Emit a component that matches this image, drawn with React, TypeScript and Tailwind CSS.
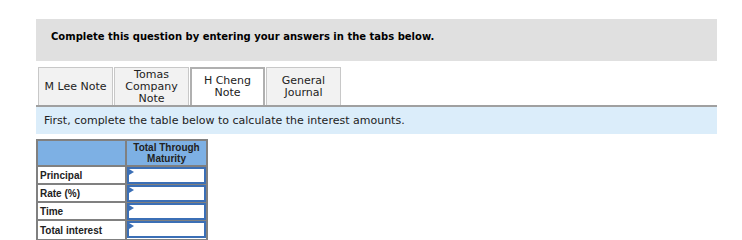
import React from "react";

const font = { fontFamily: '"DejaVu Sans", Verdana, sans-serif' };
const tableFont = { fontFamily: '"Liberation Sans", Arial, sans-serif' };

function Tab({ lines, active }: { lines: string[]; active?: boolean }) {
  return (
    <div
      className={
        "w-[75px] h-[38px] flex flex-col items-center justify-center text-[11px] leading-[12px] text-[#222] text-center " +
        (active
          ? "bg-white border-2 border-b-0 border-[#b0b0b0]"
          : "bg-[#f2f2f2] border border-b-0 border-[#c8c8c8]")
      }
    >
      {lines.map((l) => (
        <span key={l}>{l}</span>
      ))}
    </div>
  );
}

function InputCell() {
  return (
    <div className="relative h-[17px] border-2 border-[#3b6fb6] bg-white">
      <div className="absolute left-0 top-0 w-0 h-0 border-t-[3px] border-b-[3px] border-l-[5px] border-t-transparent border-b-transparent border-l-[#3b6fb6]" />
    </div>
  );
}

export default function App() {
  const rows = ["Principal", "Rate (%)", "Time", "Total interest"];
  return (
    <div className="w-[742px] h-[240px] bg-white overflow-hidden" style={font}>
      <div className="ml-[36px] mt-[19px] w-[681px] h-[42px] bg-[#e0e0e0] flex items-start pt-[12px] pl-[15px]">
        <span className="text-[10px] leading-[12px] font-bold text-black">
          Complete this question by entering your answers in the tabs below.
        </span>
      </div>
      <div className="ml-[38px] mt-[6px] flex items-end gap-[1px] h-[38px]">
        <Tab lines={["M Lee Note"]} />
        <Tab lines={["Tomas", "Company", "Note"]} />
        <Tab lines={["H Cheng", "Note"]} active />
        <Tab lines={["General", "Journal"]} />
      </div>
      <div className="ml-[36px] w-[681px] h-[29px] bg-[#dbedfa] border-t-2 border-[#a0a0a0] flex items-center pl-[8px] pt-[1px] text-[11px] text-[#222]">
        First, complete the table below to calculate the interest amounts.
      </div>
      <div className="ml-[36px] mt-[5px] w-[172px] border-2 border-[#808080] text-[10px]" style={tableFont}>
        <div className="flex h-[26px] bg-[#7db0e4] border-b-2 border-[#808080]">
          <div className="w-[89px] border-r-2 border-[#808080]" />
          <div className="flex-1 flex flex-col items-center justify-center font-bold leading-[11px] text-[#222]">
            <span>Total Through</span>
            <span>Maturity</span>
          </div>
        </div>
        {rows.map((r, i) => (
          <div
            key={r}
            className={
              "flex h-[18px] bg-white " + (i < rows.length - 1 ? "border-b-2 border-[#808080]" : "")
            }
          >
            <div className="w-[89px] border-r-2 border-[#808080] flex items-center pl-[2px] font-bold text-[#222]">
              {r}
            </div>
            <div className="flex-1">
              <InputCell />
            </div>
          </div>
        ))}
      </div>
    </div>
  );
}
